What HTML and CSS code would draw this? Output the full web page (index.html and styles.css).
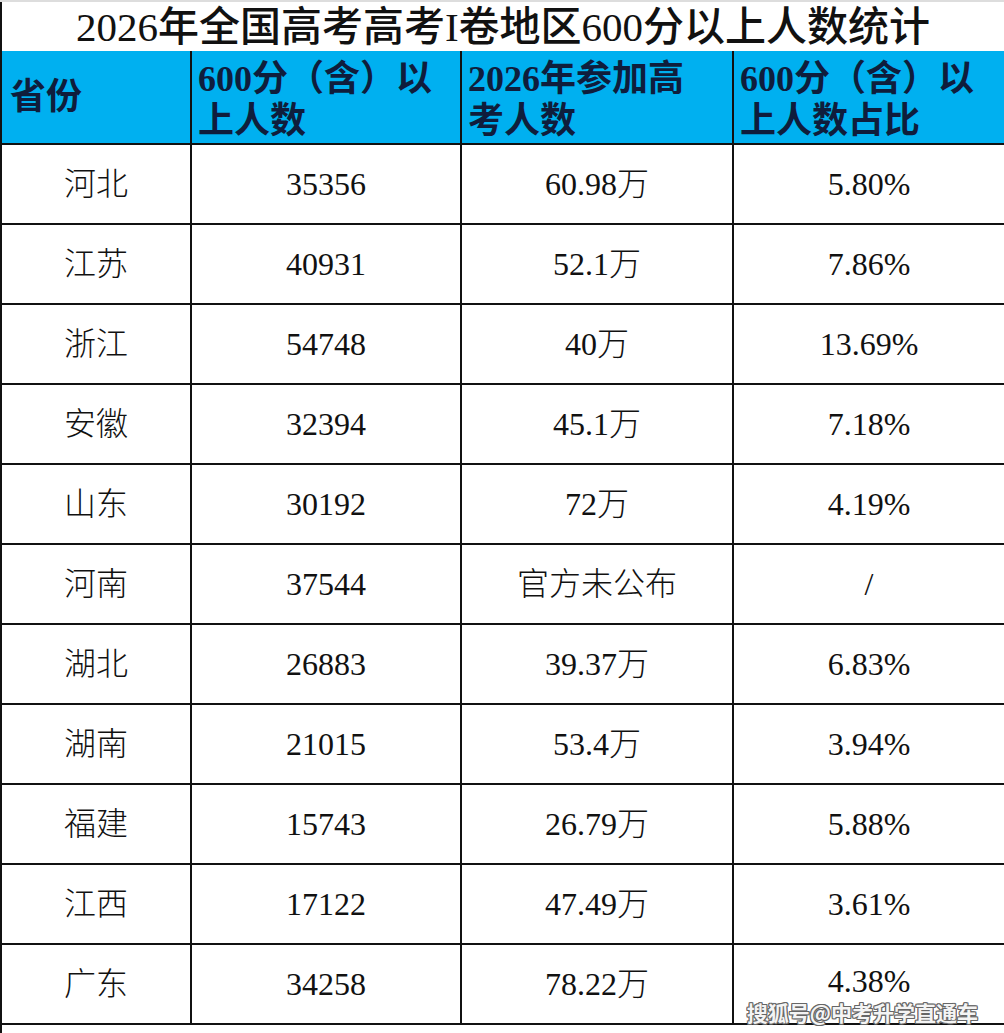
FILE: index.html
```html
<!DOCTYPE html>
<html lang="zh-CN">
<head>
  <meta charset="UTF-8">
  <title>2026年全国高考I卷地区600分以上人数统计</title>
  <link rel="stylesheet" href="styles.css">
</head>
<body>
  <div class="sheet">
    <table class="stats">
      <colgroup>
        <col class="col-prov">
        <col class="col-num">
        <col class="col-total">
        <col class="col-rate">
      </colgroup>
      <tr class="title-row">
        <td colspan="4">2026年全国高考高考I卷地区600分以上人数统计</td>
      </tr>
      <tr class="head-row">
        <th>省份</th>
        <th>600分（含）以<br>上人数</th>
        <th>2026年参加高<br>考人数</th>
        <th>600分（含）以<br>上人数占比</th>
      </tr>
      <tr><td>河北</td><td>35356</td><td>60.98万</td><td>5.80%</td></tr>
      <tr><td>江苏</td><td>40931</td><td>52.1万</td><td>7.86%</td></tr>
      <tr><td>浙江</td><td>54748</td><td>40万</td><td>13.69%</td></tr>
      <tr><td>安徽</td><td>32394</td><td>45.1万</td><td>7.18%</td></tr>
      <tr><td>山东</td><td>30192</td><td>72万</td><td>4.19%</td></tr>
      <tr><td>河南</td><td>37544</td><td>官方未公布</td><td>/</td></tr>
      <tr><td>湖北</td><td>26883</td><td>39.37万</td><td>6.83%</td></tr>
      <tr><td>湖南</td><td>21015</td><td>53.4万</td><td>3.94%</td></tr>
      <tr><td>福建</td><td>15743</td><td>26.79万</td><td>5.88%</td></tr>
      <tr><td>江西</td><td>17122</td><td>47.49万</td><td>3.61%</td></tr>
      <tr class="last-row"><td>广东</td><td>34258</td><td>78.22万</td><td>4.38%</td></tr>
      <tr class="tail-row"><td colspan="4"></td></tr>
    </table>
    <div class="watermark">搜狐号@中考升学直通车</div>
  </div>
</body>
</html>
```

FILE: styles.css
```css
* {
  margin: 0;
  padding: 0;
  box-sizing: border-box;
}

body {
  background: #fff;
  font-family: 'Liberation Serif', 'Noto Sans CJK SC', serif;
  color: #111;
  overflow: hidden;
}

.sheet {
  position: relative;
  width: 1004px;
  height: 1033px;
  overflow: hidden;
}

.stats {
  width: 1004px;
  border-collapse: collapse;
  table-layout: fixed;
}

.col-prov { width: 190px; }
.col-num { width: 270px; }
.col-total { width: 272px; }
.col-rate { width: 272px; }

.stats td,
.stats th {
  border: 2px solid #111;
  height: 80px;
  text-align: center;
  vertical-align: middle;
  font-size: 32px;
  font-weight: 300;
  line-height: 1;
}

.title-row td {
  height: 50px;
  font-size: 41px;
  font-weight: 500;
  border-top-color: #ddd;
  border-bottom: none;
  line-height: 1;
  padding-top: 2px;
}

.head-row th {
  height: 93px;
  background: #00B0F0;
  color: #0f1d3c;
  font-size: 36px;
  font-weight: 600;
  text-align: left;
  line-height: 42px;
  padding: 6px 0 0 6px;
  border-top: none;
}

.head-row th:first-child {
  padding-top: 0;
  padding-left: 8px;
}

.last-row td:last-child {
  padding-bottom: 6px;
}

.tail-row td {
  height: 20px;
  border-bottom: none;
}

.watermark {
  position: absolute;
  right: 26px;
  top: 1002px;
  font-family: 'Noto Sans CJK SC', sans-serif;
  font-size: 21px;
  line-height: 20px;
  font-weight: 700;
  color: #f4f4f4;
  text-shadow:
    1px 0 0 #666, -1px 0 0 #666, 0 1px 0 #666, 0 -1px 0 #666,
    1px 1px 0 #666, -1px -1px 0 #666, 1px -1px 0 #666, -1px 1px 0 #666;
}
```
